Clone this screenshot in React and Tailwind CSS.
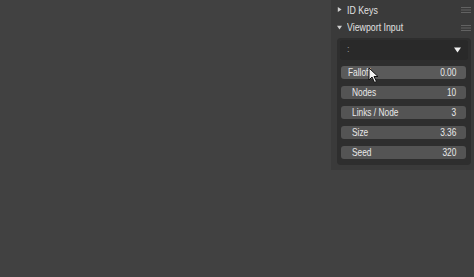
import React from "react";

const fields = [
  { label: "Falloff", value: "0.00", pad: "pl-[7px]", bg: "bg-[#5a5a5a]" },
  { label: "Nodes", value: "10", pad: "pl-[11px]", bg: "bg-[#545454]" },
  { label: "Links / Node", value: "3", pad: "pl-[11px]", bg: "bg-[#545454]" },
  { label: "Size", value: "3.36", pad: "pl-[11px]", bg: "bg-[#545454]" },
  { label: "Seed", value: "320", pad: "pl-[11px]", bg: "bg-[#545454]" },
];

function Grip() {
  return (
    <svg width="10" height="6" viewBox="0 0 10 6" className="opacity-50">
      <rect x="0" y="0" width="10" height="1" fill="#8a8a8a" />
      <rect x="0" y="2.5" width="10" height="1" fill="#8a8a8a" />
      <rect x="0" y="5" width="10" height="1" fill="#8a8a8a" />
    </svg>
  );
}

function Arrow({ down }) {
  return (
    <svg width="5" height="5" viewBox="0 0 6 6" className="mr-[5px]">
      {down ? (
        <path d="M0 1 L6 1 L3 5.5 Z" fill="#d0d0d0" />
      ) : (
        <path d="M1 0 L5.5 3 L1 6 Z" fill="#d0d0d0" />
      )}
    </svg>
  );
}

function Cursor() {
  return (
    <svg width="12" height="17" viewBox="0 0 12 17" className="absolute left-[27px] top-[1px]">
      <path d="M1 1 L1 13 L4 10 L6.5 15.5 L8.5 14.5 L6 9.5 L10 9.5 Z" fill="#f2f2f2" stroke="#111" strokeWidth="1" strokeLinejoin="round" />
    </svg>
  );
}

export default function App() {
  return (
    <div className="w-[474px] h-[277px] bg-[#414141] flex justify-end items-start overflow-hidden font-['Liberation_Sans',sans-serif]">
      <div className="w-[143px] h-[170px] bg-[#3a3a3a] flex flex-col text-[11px] text-[#e0e0e0]">
        <div className="h-[19px] flex items-center pl-[6px] pr-[3px]">
          <Arrow />
          <span className="flex-1 pt-[1px]">
            <span className="inline-block origin-left scale-x-[0.8]">ID Keys</span>
          </span>
          <Grip />
        </div>
        <div className="h-[17px] flex items-center pl-[6px] pr-[3px]">
          <Arrow down />
          <span className="flex-1">
            <span className="inline-block origin-left scale-x-[0.8]">Viewport Input</span>
          </span>
          <Grip />
        </div>
        <div className="ml-[6px] mr-[3px] mt-[2px] bg-[#2e2e2e] rounded-[4px] h-[127px] flex flex-col pl-[3px] pr-[3px] pt-[2px] gap-[6px]">
          <div className="h-[20px] bg-[#292929] rounded-[3px] flex items-center justify-between pl-[7px] pr-[7px] text-[#9a9a9a]">
            <span className="text-[9px]">:</span>
            <svg width="7" height="6" viewBox="0 0 7 6">
              <path d="M0 0.5 L7 0.5 L3.5 5.5 Z" fill="#f0f0f0" />
            </svg>
          </div>
          <div className="flex flex-col gap-[7px] pl-[1px] pr-[2px]">
            {fields.map((f, i) => (
              <div key={i} className={`relative h-[13px] ${f.bg} rounded-[3px] flex items-center justify-between pr-[10px] text-[11px] text-[#e8e8e8]`}>
                <span className={f.pad}>
                  <span className="inline-block origin-left scale-x-[0.76]">{f.label}</span>
                </span>
                <span className="inline-block origin-right scale-x-[0.76]">{f.value}</span>
                {i === 0 && <Cursor />}
              </div>
            ))}
          </div>
        </div>
      </div>
    </div>
  );
}
